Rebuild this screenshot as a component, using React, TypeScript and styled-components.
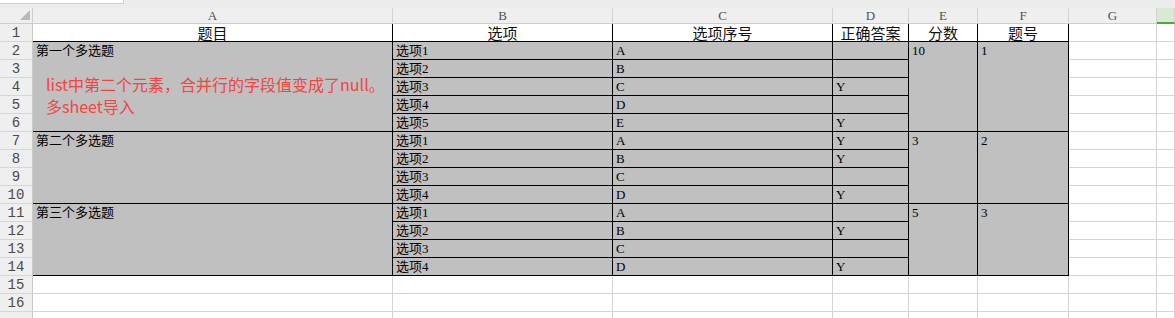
import React from "react";
import styled, { createGlobalStyle, css } from "styled-components";

const Global = createGlobalStyle`
  html, body { margin: 0; padding: 0; background: #fff; }
  body { width: 1175px; height: 318px; overflow: hidden; font-family: "Noto Sans CJK SC", sans-serif; }
`;

const Page = styled.div`
  position: relative;
  width: 1175px;
  height: 318px;
  overflow: hidden;
  display: flex;
  flex-direction: column;
`;

const TopStrip = styled.div`
  height: 8px;
  flex: none;
  background: #ececec;
  display: flex;
  align-items: flex-start;
`;

const NameBox = styled.div`
  width: 123px;
  height: 3px;
  background: #fff;
  border-right: 1px solid #d0d0d0;
  border-bottom: 1px solid #cfcfcf;
`;

const Sheet = styled.div`
  display: grid;
  grid-template-columns: 33px 360px 220px 220px 76px 69px 91px 88px 1fr;
  grid-template-rows: 16px repeat(17, 18px);
  width: 1175px;
`;

type Pos = { $row: number; $col: number; $span?: number };

const placed = css<Pos>`
  grid-row: ${(p) => p.$row} / span ${(p) => p.$span ?? 1};
  grid-column: ${(p) => p.$col};
  box-sizing: border-box;
  min-width: 0;
  white-space: nowrap;
`;

const Corner = styled.div<Pos>`
  ${placed};
  background: #efefef;
  border-right: 1px solid #cdcdcd;
  border-bottom: 1px solid #cdcdcd;
  display: flex;
  justify-content: flex-end;
  align-items: flex-end;
  padding: 0 2px 3px 0;
`;

const ColHeader = styled.div<Pos & { $active?: boolean }>`
  ${placed};
  background: ${(p) => (p.$active ? "#d9ead2" : "#efefef")};
  border-right: 1px solid #d2d2d2;
  border-bottom: ${(p) => (p.$active ? "2px solid #4ea83a" : "1px solid #cdcdcd")};
  font-family: "Liberation Serif", "DejaVu Serif", serif;
  font-size: 13px;
  line-height: 15px;
  color: #505050;
  text-align: center;
`;

const RowHeader = styled.div<Pos>`
  ${placed};
  background: #efefef;
  border-right: 1px solid #c9c9c9;
  border-bottom: 1px solid #d6d6d6;
  font-family: "Liberation Mono", "DejaVu Sans Mono", monospace;
  font-size: 14px;
  line-height: 18px;
  color: #4a4a4a;
  text-align: center;
`;

const EmptyCell = styled.div<Pos>`
  ${placed};
  background: #fff;
  border-right: 1px solid #d4d4d4;
  border-bottom: 1px solid #d4d4d4;
`;

const TitleCell = styled.div<Pos>`
  ${placed};
  background: #fff;
  border-right: 1px solid #000;
  border-bottom: 1px solid #000;
  font-family: "Noto Sans CJK SC", sans-serif;
  font-size: 15px;
  line-height: 17px;
  color: #111;
  text-align: center;
`;

const DataCell = styled.div<Pos>`
  ${placed};
  overflow: hidden;
  background: #c0c0c0;
  border-right: 1px solid #000;
  border-bottom: 1px solid #000;
  padding-left: 3px;
  font-family: "Liberation Serif", "Noto Sans CJK SC", serif;
  font-size: 13px;
  line-height: 17px;
  color: #000;
`;

const Note = styled.div`
  position: absolute;
  left: 46px;
  top: 73px;
  font-family: "Noto Sans CJK SC", sans-serif;
  font-size: 16px;
  line-height: 22px;
  color: #f3443f;
  white-space: nowrap;
`;

type Group = { title: string; score: string; no: string; options: [string, string, string][] };

const groups: Group[] = [
  {
    title: "第一个多选题",
    score: "10",
    no: "1",
    options: [
      ["选项1", "A", ""],
      ["选项2", "B", ""],
      ["选项3", "C", "Y"],
      ["选项4", "D", ""],
      ["选项5", "E", "Y"],
    ],
  },
  {
    title: "第二个多选题",
    score: "3",
    no: "2",
    options: [
      ["选项1", "A", "Y"],
      ["选项2", "B", "Y"],
      ["选项3", "C", ""],
      ["选项4", "D", "Y"],
    ],
  },
  {
    title: "第三个多选题",
    score: "5",
    no: "3",
    options: [
      ["选项1", "A", ""],
      ["选项2", "B", "Y"],
      ["选项3", "C", ""],
      ["选项4", "D", "Y"],
    ],
  },
];

const letters = ["A", "B", "C", "D", "E", "F", "G", ""];
const headers = ["题目", "选项", "选项序号", "正确答案", "分数", "题号"];

export default function App() {
  const cells: React.ReactNode[] = [];

  cells.push(
    <Corner key="corner" $row={1} $col={1}>
      <svg width="10" height="10" viewBox="0 0 10 10">
        <polygon points="10,0 10,10 0,10" fill="#b9b9b9" />
      </svg>
    </Corner>
  );
  letters.forEach((l, i) =>
    cells.push(
      <ColHeader key={"h" + i} $row={1} $col={i + 2} $active={i === 7}>
        {l}
      </ColHeader>
    )
  );
  for (let r = 1; r <= 17; r++) {
    cells.push(
      <RowHeader key={"r" + r} $row={r + 1} $col={1}>
        {r <= 16 ? r : ""}
      </RowHeader>
    );
  }
  headers.forEach((h, i) =>
    cells.push(
      <TitleCell key={"t" + i} $row={2} $col={i + 2}>
        {h}
      </TitleCell>
    )
  );

  let sheetRow = 2;
  groups.forEach((g, gi) => {
    const n = g.options.length;
    const gridRow = sheetRow + 1;
    cells.push(
      <DataCell key={`g${gi}a`} $row={gridRow} $col={2} $span={n}>
        {g.title}
      </DataCell>
    );
    g.options.forEach((o, oi) => {
      o.forEach((v, ci) =>
        cells.push(
          <DataCell key={`g${gi}o${oi}c${ci}`} $row={gridRow + oi} $col={3 + ci}>
            {v}
          </DataCell>
        )
      );
    });
    cells.push(
      <DataCell key={`g${gi}e`} $row={gridRow} $col={6} $span={n}>
        {g.score}
      </DataCell>
    );
    cells.push(
      <DataCell key={`g${gi}f`} $row={gridRow} $col={7} $span={n}>
        {g.no}
      </DataCell>
    );
    sheetRow += n;
  });

  for (let r = 1; r <= 17; r++) {
    const startCol = r <= 14 ? 8 : 2;
    for (let c = startCol; c <= 9; c++) {
      cells.push(<EmptyCell key={`e${r}-${c}`} $row={r + 1} $col={c} />);
    }
  }

  return (
    <Page>
      <Global />
      <TopStrip>
        <NameBox />
      </TopStrip>
      <Sheet>{cells}</Sheet>
      <Note>
        list中第二个元素，合并行的字段值变成了null。
        <br />
        多sheet导入
      </Note>
    </Page>
  );
}
